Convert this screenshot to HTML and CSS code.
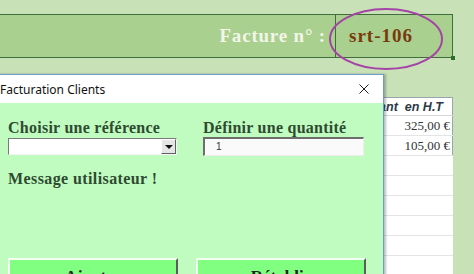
FILE: index.html
```html
<!DOCTYPE html>
<html lang="fr">
<head>
    <meta charset="UTF-8">
    <title>Facturation Clients</title>
    <link rel="stylesheet" href="styles.css">
</head>
<body>
    <div class="sheet">
        <div class="title-bar">
            <div class="label-cell">Facture n° :</div>
            <div class="num-cell">srt-106<span class="handle"></span></div>
            <svg class="ring" width="118" height="66" viewBox="0 0 118 66">
                <ellipse cx="58" cy="32" rx="56" ry="30" fill="none" stroke="#a444a6" stroke-width="2"/>
            </svg>
        </div>

        <table class="grid">
            <tr><th></th><th class="amount">Montant&nbsp; en H.T</th></tr>
            <tr><td></td><td class="amount">325,00 €</td></tr>
            <tr><td></td><td class="amount">105,00 €</td></tr>
            <tr><td></td><td></td></tr>
            <tr><td></td><td></td></tr>
            <tr><td></td><td></td></tr>
            <tr><td></td><td></td></tr>
            <tr><td></td><td></td></tr>
            <tr><td></td><td></td></tr>
        </table>

        <!-- UserForm window over the sheet -->
        <div class="dialog">
            <div class="dialog-head">
                <span>Facturation Clients</span>
                <svg class="close" width="10" height="10" viewBox="0 0 10 10">
                    <path d="M0.5 0.5 L9.5 9.5 M9.5 0.5 L0.5 9.5" stroke="#222" stroke-width="1"/>
                </svg>
            </div>
            <div class="dialog-body">
                <div class="fields">
                    <div class="field-ref">
                        <div class="label">Choisir une référence</div>
                        <div class="select"><span class="select-btn"><i class="arrow"></i></span></div>
                    </div>
                    <div class="field-qty">
                        <div class="label">Définir une quantité</div>
                        <div class="qty">1</div>
                    </div>
                </div>
                <div class="label message">Message utilisateur !</div>
                <div class="buttons">
                    <button>Ajouter</button>
                    <button>Rétablir</button>
                </div>
            </div>
        </div>
    </div>
</body>
</html>
```

FILE: styles.css
```css
body {
    margin: 0;
    padding: 0;
    background: #c8e1b6;
    font-family: "Liberation Serif", serif;
    overflow: hidden;
}
.sheet {
    position: relative;
    height: 274px;
    padding-top: 14px;
    box-sizing: border-box;
}
.title-bar {
    position: relative;
    display: flex;
    width: 453px;
    height: 44px;
    box-sizing: border-box;
    border: 1px solid #3e6e3e;
    border-left: none;
    background: #a9d08e;
}
.label-cell {
    flex: 1;
    display: flex;
    align-items: center;
    justify-content: flex-end;
    padding-right: 9px;
    color: #f2f5e8;
    font-weight: bold;
    font-size: 19px;
    letter-spacing: 0.8px;
}
.num-cell {
    position: relative;
    width: 117px;
    display: flex;
    align-items: center;
    padding-left: 13px;
    box-sizing: border-box;
    border-left: 1px solid #3e6e3e;
    color: #7a3a0e;
    font-weight: bold;
    font-size: 19px;
    letter-spacing: 1px;
}
.handle {
    position: absolute;
    right: -3px;
    bottom: -3px;
    width: 4px;
    height: 4px;
    background: #2f6a2f;
}
.ring {
    position: absolute;
    left: 328px;
    top: -8px;
}

.grid {
    width: 453px;
    margin-top: 39px;
    border-collapse: collapse;
    background: white;
}
.grid th, .grid td {
    height: 19px;
    padding: 0 2px 0 0;
    border-bottom: 1px solid #e2e4e6;
}
.grid th {
    height: 17px;
    border-top: 1px solid #97a3ad;
    border-bottom: 1px solid #d4d8dc;
    font-family: "Liberation Sans", sans-serif;
    font-style: italic;
    font-size: 12px;
    color: #2c3846;
    padding-right: 9px;
}
.grid .amount {
    width: 70px;
    text-align: right;
    white-space: nowrap;
    border-right: 1px solid #9aa5ae;
    font-size: 13px;
    color: #333;
}
.grid th.amount {
    font-size: 12.5px;
    color: #2c3846;
}

.dialog {
    position: absolute;
    left: -8px;
    top: 74px;
    width: 392px;
    height: 210px;
    box-sizing: border-box;
    border: 1px solid #6f9bc8;
    box-shadow: 2px 0 2px rgba(60, 70, 80, 0.35);
    background: #c0fcc0;
}
.dialog-head {
    display: flex;
    align-items: center;
    justify-content: space-between;
    height: 28px;
    padding: 0 14px 0 7px;
    background: white;
    font-family: "Noto Sans", sans-serif;
    font-size: 12px;
    color: #111;
}
.dialog-body {
    padding: 16px 0 0 15px;
}
.fields {
    display: flex;
    gap: 26px;
}
.field-ref {
    width: 169px;
}
.field-qty {
    width: 161px;
}
.label {
    font-weight: bold;
    font-size: 16px;
    line-height: 18px;
    letter-spacing: 0.25px;
    color: #2e4a30;
    white-space: nowrap;
}
.select {
    display: flex;
    justify-content: flex-end;
    height: 17px;
    margin-top: 1px;
    box-sizing: border-box;
    background: white;
    border-top: 1px solid #7a7a7a;
    border-left: 1px solid #7a7a7a;
    border-right: 1px solid #f4f4f4;
    border-bottom: 1px solid #f4f4f4;
}
.select-btn {
    width: 15px;
    box-sizing: border-box;
    background: #e6e6e6;
    border-right: 1px solid #606060;
    border-bottom: 1px solid #606060;
    border-top: 1px solid #fff;
    border-left: 1px solid #fff;
    display: flex;
    align-items: center;
    justify-content: center;
}
.arrow {
    width: 0;
    height: 0;
    border-left: 4px solid transparent;
    border-right: 4px solid transparent;
    border-top: 4px solid #111;
}
.qty {
    height: 19px;
    box-sizing: border-box;
    background: #fafafa;
    border-top: 2px solid #6e6e6e;
    border-left: 2px solid #6e6e6e;
    border-right: 1px solid #eee;
    border-bottom: 1px solid #eee;
    padding-left: 11px;
    font-family: "Liberation Sans", sans-serif;
    font-size: 10px;
    line-height: 16px;
    color: #333;
}
.message {
    margin-top: 14px;
    letter-spacing: 0.4px;
}
.buttons {
    display: flex;
    gap: 18px;
    margin-top: 70px;
}
.buttons button {
    width: 170px;
    height: 38px;
    padding: 0;
    background: #80ff80;
    border-top: 2px solid #f4fff4;
    border-left: 2px solid #f4fff4;
    border-right: 2px solid #5c5c5c;
    border-bottom: 2px solid #5c5c5c;
    font-family: "Liberation Serif", serif;
    font-weight: bold;
    font-size: 17px;
    color: #222;
}
```
